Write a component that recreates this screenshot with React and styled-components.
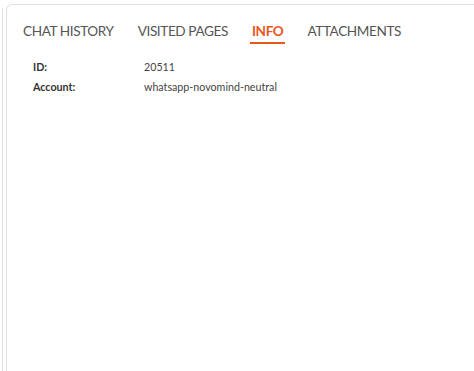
import React, { useState } from 'react';
import styled, { createGlobalStyle } from 'styled-components';

const Global = createGlobalStyle`
	html, body {
		margin: 0;
		padding: 0;
		background: #fff;
	}
	body {
		font-family: Lato, "Open Sans", sans-serif;
		overflow: hidden;
	}
`;

const Page = styled.div`
	display: flex;
	height: 100vh;
	overflow: hidden;
	padding-top: 4px;
	box-sizing: border-box;
`;

const SidePanel = styled.div`
	width: 2px;
	margin-top: 4px;
	border-right: 1px solid #e3e3e3;
	flex: none;
`;

const Card = styled.section`
	flex: 1;
	margin-left: 3px;
	margin-right: -12px;
	border: 1px solid #e0e0e0;
	border-bottom: 0;
	border-radius: 6px 6px 0 0;
	padding: 15px 0 0 14px;
`;

const Tabs = styled.ul`
	display: flex;
	gap: 20px;
	list-style: none;
	margin: 0;
	padding: 0;
`;

const TabButton = styled.li`
	font-size: 13.6px;
	line-height: 18px;
	letter-spacing: -0.4px;
	text-transform: uppercase;
	color: ${p => (p.$active ? '#e8561e' : '#555')};
	font-weight: ${p => (p.$active ? 700 : 400)};
	padding: 2px 2px 2px;
	border-bottom: 2px solid ${p => (p.$active ? '#e8561e' : 'transparent')};
	cursor: pointer;
`;

const InfoTable = styled.dl`
	display: grid;
	grid-template-columns: 111px auto;
	row-gap: 8px;
	margin: 17px 0 0 12px;
	font-size: 10.7px;
	line-height: 12px;
`;

const Label = styled.dt`
	color: #333;
	font-weight: 700;
`;

const Value = styled.dd`
	margin: 0;
	color: #444;
`;

const tabs = ['Chat History', 'Visited Pages', 'Info', 'Attachments'];

export default function App() {
	const [active, setActive] = useState('Info');
	return (
		<>
			<Global />
			<Page>
				<SidePanel />
				<Card>
					<Tabs>
						{tabs.map(t => (
							<TabButton key={t} $active={active === t} onClick={() => setActive(t)}>
								{t}
							</TabButton>
						))}
					</Tabs>
					{active === 'Info' && (
						<InfoTable>
							<Label>ID:</Label>
							<Value>20511</Value>
							<Label>Account:</Label>
							<Value>whatsapp-novomind-neutral</Value>
						</InfoTable>
					)}
				</Card>
			</Page>
		</>
	);
}
